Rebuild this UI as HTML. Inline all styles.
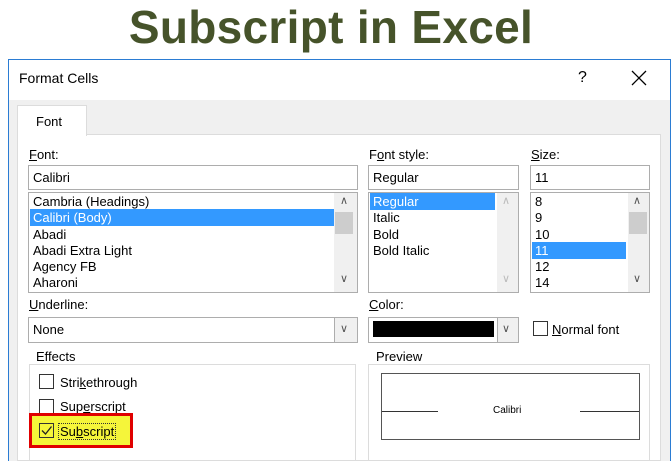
<!DOCTYPE html>
<html><head><style>
*{margin:0;padding:0;box-sizing:border-box}
body{width:672px;height:461px;background:#fff;font-family:"Liberation Sans",sans-serif;font-size:13px;color:#000;position:relative;overflow:hidden}
.a{position:absolute}
.t{white-space:nowrap}
.in{background:#fff;border:1px solid #adadad}
.sel{background:#3399ff;color:#fff}
.sb{background:#f0f0f0}
.cb{width:15px;height:15px;border:1px solid #333;background:#fff}
.grp{border:1px solid #dcdcdc}
</style></head><body>
<div class="a t" style="left:0;width:662px;top:0px;text-align:center;font-size:46px;font-weight:bold;color:#46532a;letter-spacing:0.3px">Subscript in Excel</div>
<div class="a" style="left:8px;top:59px;width:663px;height:402px;border:1px solid #2b7cd3;border-bottom:none;background:#f0f0f0"></div>
<div class="a" style="left:9px;top:60px;width:661px;height:40px;background:#fff"></div>
<div class="a t" style="left:19px;top:70px;font-size:14px">Format Cells</div>
<div class="a t" style="left:578px;top:69px;font-size:16px">?</div>
<svg class="a" style="left:631px;top:70px" width="16" height="16"><path d="M1 1L15 15M15 1L1 15" stroke="#000" stroke-width="1.3"/></svg>
<div class="a" style="left:17px;top:134px;width:644px;height:327px;background:#fff;border:1px solid #dcdcdc"></div>
<div class="a" style="left:17px;top:105px;width:70px;height:31px;background:#fff;border:1px solid #dcdcdc;border-bottom:none"></div>
<div class="a t" style="left:36px;top:114px">Font</div>

<div class="a t" style="left:29px;top:147px"><u>F</u>ont:</div>
<div class="a in" style="left:28px;top:165px;width:330px;height:25px"></div>
<div class="a t" style="left:33px;top:170px">Calibri</div>
<div class="a in" style="left:28px;top:192px;width:330px;height:101px"></div>
<div class="a sb" style="left:334px;top:193px;width:23px;height:99px"></div>
<div class="a" style="left:335px;top:212px;width:18px;height:22px;background:#cdcdcd"></div>
<div class="a t" style="left:340px;top:194px;font-size:11px;color:#555">∧</div>
<div class="a t" style="left:340px;top:272px;font-size:11px;color:#555">∨</div>
<div class="a sel" style="left:30px;top:209px;width:304px;height:17px"></div>
<div class="a t" style="left:33px;top:194px;line-height:16.3px">Cambria (Headings)<br><span style="color:#fff">Calibri (Body)</span><br>Abadi<br>Abadi Extra Light<br>Agency FB<br>Aharoni</div>

<div class="a t" style="left:369px;top:147px">F<u>o</u>nt style:</div>
<div class="a in" style="left:368px;top:165px;width:151px;height:25px"></div>
<div class="a t" style="left:373px;top:170px">Regular</div>
<div class="a in" style="left:368px;top:192px;width:151px;height:101px"></div>
<div class="a sb" style="left:497px;top:193px;width:21px;height:99px"></div>
<div class="a t" style="left:502px;top:194px;font-size:11px;color:#bbb">∧</div>
<div class="a t" style="left:502px;top:272px;font-size:11px;color:#bbb">∨</div>
<div class="a sel" style="left:370px;top:193px;width:125px;height:17px"></div>
<div class="a t" style="left:373px;top:194px;line-height:16.3px"><span style="color:#fff">Regular</span><br>Italic<br>Bold<br>Bold Italic</div>

<div class="a t" style="left:531px;top:147px"><u>S</u>ize:</div>
<div class="a in" style="left:530px;top:165px;width:120px;height:25px"></div>
<div class="a t" style="left:535px;top:170px">11</div>
<div class="a in" style="left:530px;top:192px;width:120px;height:101px"></div>
<div class="a sb" style="left:628px;top:193px;width:21px;height:99px"></div>
<div class="a" style="left:629px;top:212px;width:18px;height:22px;background:#cdcdcd"></div>
<div class="a t" style="left:633px;top:194px;font-size:11px;color:#555">∧</div>
<div class="a t" style="left:633px;top:272px;font-size:11px;color:#555">∨</div>
<div class="a sel" style="left:532px;top:242px;width:94px;height:17px"></div>
<div class="a t" style="left:535px;top:194px;line-height:16.3px">8<br>9<br>10<br><span style="color:#fff">11</span><br>12<br>14</div>

<div class="a t" style="left:29px;top:297px"><u>U</u>nderline:</div>
<div class="a in" style="left:28px;top:317px;width:330px;height:26px"></div>
<div class="a t" style="left:33px;top:322px">None</div>
<div class="a sb" style="left:334px;top:318px;width:23px;height:24px;border-left:1px solid #adadad"></div>
<div class="a t" style="left:340px;top:322px;font-size:11px;color:#555">∨</div>
<div class="a t" style="left:369px;top:297px"><u>C</u>olor:</div>
<div class="a in" style="left:368px;top:317px;width:151px;height:26px"></div>
<div class="a" style="left:373px;top:321px;width:121px;height:16px;background:#000"></div>
<div class="a sb" style="left:497px;top:318px;width:21px;height:24px;border-left:1px solid #adadad"></div>
<div class="a t" style="left:502px;top:322px;font-size:11px;color:#555">∨</div>
<div class="a cb" style="left:533px;top:321px"></div>
<div class="a t" style="left:552px;top:322px"><u>N</u>ormal font</div>

<div class="a grp" style="left:29px;top:364px;width:327px;height:97px"></div>
<div class="a t" style="left:33px;top:349px;background:#fff;padding:0 3px">Effects</div>
<div class="a cb" style="left:39px;top:374px"></div>
<div class="a t" style="left:60px;top:375px">Stri<u>k</u>ethrough</div>
<div class="a cb" style="left:39px;top:399px"></div>
<div class="a t" style="left:60px;top:399px">Sup<u>e</u>rscript</div>
<div class="a" style="left:29px;top:413px;width:104px;height:35px;background:#f5f53a;border:3px solid #e00000"></div>
<div class="a cb" style="left:39px;top:423px;background:#f5f53a"></div>
<svg class="a" style="left:39px;top:423px" width="15" height="15"><path d="M3 7.5L6.5 11L12.5 3.5" stroke="#222" stroke-width="1.3" fill="none"/></svg>
<div class="a t" style="left:58px;top:423px;border:1px dotted #333;padding:0 1px">Su<u>b</u>script</div>

<div class="a grp" style="left:368px;top:364px;width:282px;height:97px"></div>
<div class="a t" style="left:373px;top:349px;background:#fff;padding:0 3px">Preview</div>
<div class="a" style="left:381px;top:373px;width:259px;height:67px;border:1px solid #555"></div>
<div class="a" style="left:382px;top:411px;width:56px;height:1px;background:#333"></div>
<div class="a" style="left:580px;top:411px;width:59px;height:1px;background:#333"></div>
<div class="a t" style="left:493px;top:405px;font-size:10px">Calibri</div>
</body></html>
